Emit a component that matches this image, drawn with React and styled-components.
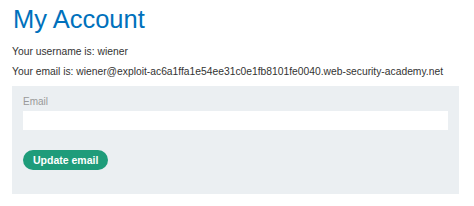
import React from "react";
import styled, { createGlobalStyle } from "styled-components";

const GlobalStyle = createGlobalStyle`
  body {
    margin: 0;
    background: #fff;
    font-family: "Liberation Sans", Arial, sans-serif;
    color: #333332;
  }
`;

const Page = styled.div`
  padding: 4px 15px 0 12px;
`;

const Title = styled.h1`
  margin: 0 0 0 1px;
  font-size: 25.5px;
  font-weight: 400;
  line-height: 30px;
  color: #0071bc;
`;

const Line = styled.p`
  margin: ${(p) => p.top || 8}px 0 0;
  font-size: 10.3px;
  line-height: 12px;
`;

const Panel = styled.div`
  margin-top: 8px;
  background: #ebeff2;
  padding: 10px 11px 21px;
  height: 108px;
  box-sizing: border-box;
`;

const Label = styled.label`
  display: block;
  font-size: 10px;
  line-height: 12px;
  color: #999;
`;

const Input = styled.input`
  display: block;
  width: 100%;
  box-sizing: border-box;
  height: 19px;
  margin-top: 3px;
  border: none;
  background: #fff;
`;

const Button = styled.button`
  margin-top: 20px;
  height: 20px;
  padding: 0 10px;
  border: none;
  border-radius: 10px;
  background: #1e9c7a;
  color: #fff;
  font-family: "Liberation Sans", Arial, sans-serif;
  font-weight: 700;
  font-size: 10.5px;
`;

export default function App() {
  return (
    <>
      <GlobalStyle />
      <Page>
        <Title>My Account</Title>
        <Line top={12}>Your username is: wiener</Line>
        <Line>
          Your email is:
          wiener@exploit-ac6a1ffa1e54ee31c0e1fb8101fe0040.web-security-academy.net
        </Line>
        <Panel>
          <Label>Email</Label>
          <Input type="email" name="email" />
          <Button>Update email</Button>
        </Panel>
      </Page>
    </>
  );
}
